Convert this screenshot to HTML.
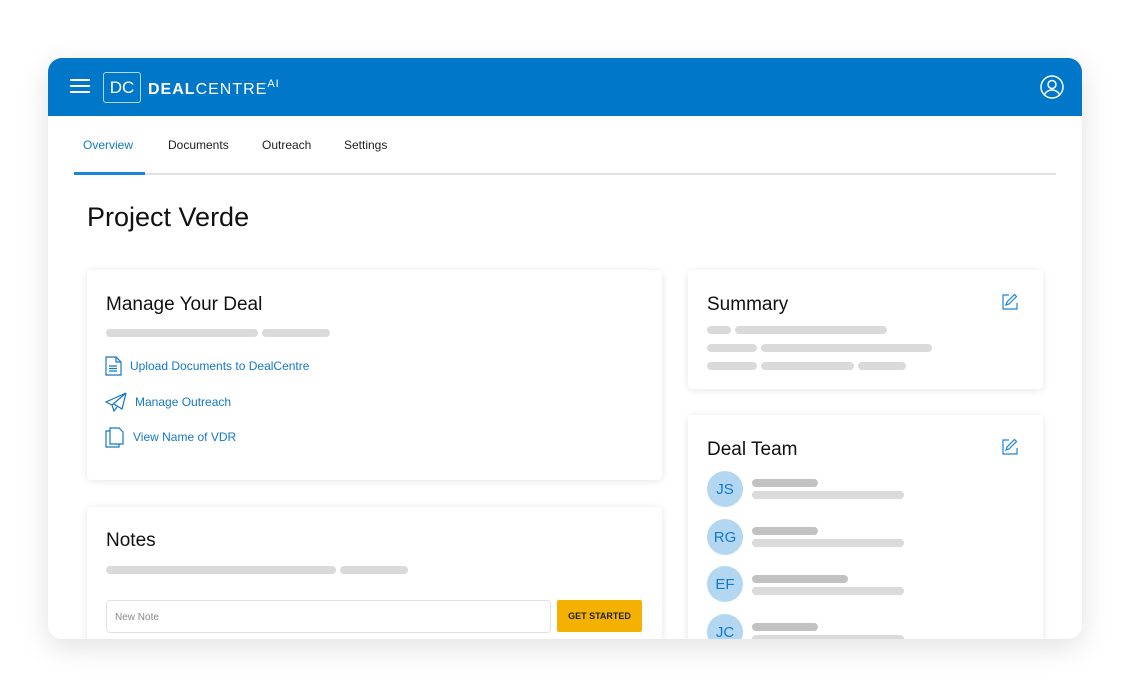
<!DOCTYPE html>
<html><head><style>
*{margin:0;padding:0;box-sizing:border-box}
body{width:1130px;height:696px;background:#fff;font-family:"Liberation Sans",sans-serif;position:relative;overflow:hidden}
.win{position:absolute;left:48px;top:58px;width:1034px;height:581px;border-radius:14px;background:#fff;overflow:hidden;box-shadow:0 8px 30px rgba(0,0,0,.12)}
.hdr{position:absolute;left:0;top:0;width:100%;height:58px;background:#0077c8}
.card{position:absolute;background:#fff;border-radius:4px;box-shadow:0 1px 8px rgba(0,0,0,.10)}
.h{position:absolute;font-size:19px;color:#111}
.bar{position:absolute;height:8px;border-radius:4px;background:#dadada}
.bar.d{background:#c2c2c2}
.lnk{position:absolute;font-size:12px;color:#1478c8}
.av{position:absolute;left:19px;width:36px;height:36px;border-radius:50%;background:#b3d7f0;color:#1478c8;font-size:15px;text-align:center;line-height:38px}
.tab{position:absolute;top:80px;font-size:12px;color:#222}
</style></head><body>
<div class="win">
 <div class="hdr">
  <div style="position:absolute;left:22px;top:21px;width:20px;height:2px;background:#fff;box-shadow:0 6px 0 #fff,0 12px 0 #fff"></div>
  <div style="position:absolute;left:55px;top:14px;width:38px;height:31px;border:1px solid rgba(255,255,255,.7);border-radius:3px;color:#fff;font-size:17px;text-align:center;line-height:29px">DC</div>
  <div style="position:absolute;left:100px;top:20px;color:#fff;font-size:16px;letter-spacing:1px"><b>DEAL</b>CENTRE<sup style="font-size:11px;vertical-align:7px">AI</sup></div>
  <svg style="position:absolute;left:992px;top:17px" width="24" height="24" viewBox="0 0 24 24" fill="none" stroke="#fff" stroke-width="1.5"><circle cx="12" cy="12" r="11"/><circle cx="12" cy="9.5" r="4"/><path d="M4.5 19.5c2-3.5 5-4.5 7.5-4.5s5.5 1 7.5 4.5"/></svg>
 </div>
 <div class="tab" style="left:35px;color:#1478c8">Overview</div>
 <div class="tab" style="left:120px">Documents</div>
 <div class="tab" style="left:214px">Outreach</div>
 <div class="tab" style="left:296px">Settings</div>
 <div style="position:absolute;left:26px;top:115px;width:982px;height:2px;background:#e0e0e0"></div>
 <div style="position:absolute;left:26px;top:114px;width:71px;height:3px;background:#1a86d6"></div>
 <div style="position:absolute;left:39px;top:144px;font-size:27px;color:#111">Project Verde</div>

 <div class="card" style="left:39px;top:212px;width:575px;height:210px">
  <div class="h" style="left:19px;top:24px">Manage Your Deal</div>
  <div class="bar" style="left:19px;top:59px;width:152px"></div>
  <div class="bar" style="left:175px;top:59px;width:68px"></div>
  <svg style="position:absolute;left:18px;top:86px" width="17" height="20" viewBox="0 0 17 20" fill="none" stroke="#1478c8" stroke-width="1.2"><path d="M1 1h10l5 5v13H1z M11 1v5h5"/><path d="M4 10h8M4 12.5h8M4 15h8"/></svg>
  <div class="lnk" style="left:43px;top:89px">Upload Documents to DealCentre</div>
  <svg style="position:absolute;left:18px;top:122px" width="22" height="20" viewBox="0 0 22 20" fill="none" stroke="#1478c8" stroke-width="1.2"><path d="M21 1L1 10l6 3 2 6 3-4 M21 1L7 13 M21 1l-4 16-8-5"/></svg>
  <div class="lnk" style="left:48px;top:125px">Manage Outreach</div>
  <svg style="position:absolute;left:18px;top:157px" width="19" height="21" viewBox="0 0 19 21" fill="none" stroke="#1478c8" stroke-width="1.2"><path d="M5 1h9l4 4v12H5z"/><path d="M5 4H1v16h13v-3"/></svg>
  <div class="lnk" style="left:46px;top:160px">View Name of VDR</div>
 </div>

 <div class="card" style="left:39px;top:449px;width:575px;height:160px">
  <div class="h" style="left:19px;top:23px">Notes</div>
  <div class="bar" style="left:19px;top:59px;width:230px"></div>
  <div class="bar" style="left:253px;top:59px;width:68px"></div>
  <div style="position:absolute;left:19px;top:93px;width:445px;height:33px;border:1px solid #e2e2e2;border-radius:4px;font-size:10px;color:#888;padding:11px 8px">New Note</div>
  <div style="position:absolute;left:470px;top:93px;width:85px;height:32px;background:#f4b100;border-radius:2px;font-size:9px;font-weight:bold;color:#222;text-align:center;line-height:32px">GET STARTED</div>
 </div>

 <div class="card" style="left:640px;top:212px;width:355px;height:119px">
  <div class="h" style="left:19px;top:24px">Summary</div>
  <svg style="position:absolute;left:313px;top:23px" width="17" height="17" viewBox="0 0 17 17" fill="none" stroke="#1a86d6" stroke-width="1.2"><path d="M8 2H2v14h14v-6"/><path d="M13.5 1.5l2 2-7.5 7.5-3 1 1-3z"/></svg>
  <div class="bar" style="left:19px;top:56px;width:24px"></div>
  <div class="bar" style="left:47px;top:56px;width:152px"></div>
  <div class="bar" style="left:19px;top:74px;width:50px"></div>
  <div class="bar" style="left:73px;top:74px;width:171px"></div>
  <div class="bar" style="left:19px;top:92px;width:50px"></div>
  <div class="bar" style="left:73px;top:92px;width:93px"></div>
  <div class="bar" style="left:170px;top:92px;width:48px"></div>
 </div>

 <div class="card" style="left:640px;top:357px;width:355px;height:260px">
  <div class="h" style="left:19px;top:24px">Deal Team</div>
  <svg style="position:absolute;left:313px;top:23px" width="17" height="17" viewBox="0 0 17 17" fill="none" stroke="#1a86d6" stroke-width="1.2"><path d="M8 2H2v14h14v-6"/><path d="M13.5 1.5l2 2-7.5 7.5-3 1 1-3z"/></svg>
  <div class="av" style="top:56px">JS</div><div class="bar d" style="left:64px;top:64px;width:66px"></div><div class="bar" style="left:64px;top:76px;width:152px"></div>
  <div class="av" style="top:104px">RG</div><div class="bar d" style="left:64px;top:112px;width:66px"></div><div class="bar" style="left:64px;top:124px;width:152px"></div>
  <div class="av" style="top:151px">EF</div><div class="bar d" style="left:64px;top:160px;width:96px"></div><div class="bar" style="left:64px;top:172px;width:152px"></div>
  <div class="av" style="top:199px">JC</div><div class="bar d" style="left:64px;top:208px;width:66px"></div><div class="bar" style="left:64px;top:220px;width:152px"></div>
 </div>
</div>
</body></html>
